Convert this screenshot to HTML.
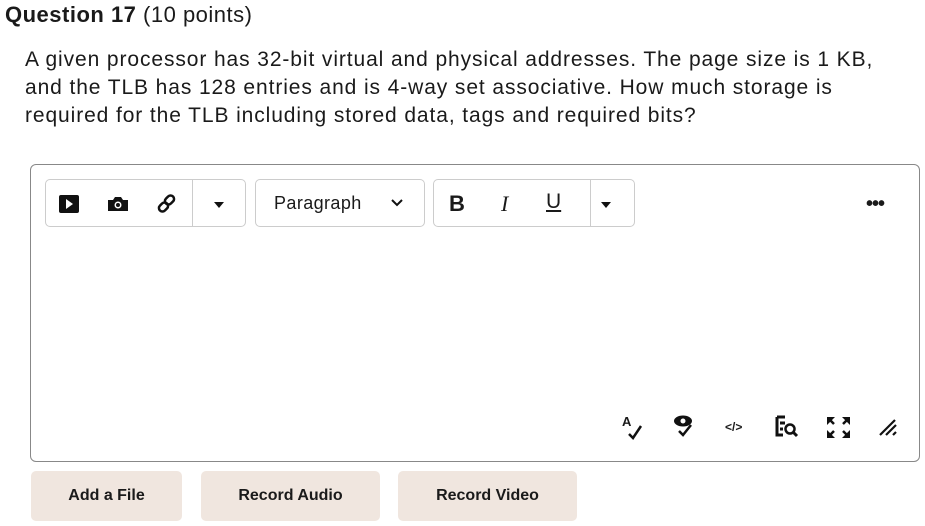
<!DOCTYPE html><html><head><style>
body{margin:0;width:925px;height:526px;background:#fff;font-family:"Liberation Sans",sans-serif;color:#1a1a1a;position:relative;overflow:hidden}
.a{position:absolute}
.t{left:5px;top:2px;font-size:22px;letter-spacing:0.5px}
.q{left:25px;top:46px;font-size:21px;line-height:28px;width:870px;letter-spacing:0.9px}
.ed{left:30px;top:164px;width:888px;height:296px;border:1px solid #888;border-radius:6px}
.g{top:179px;height:48px;border:1px solid #ccc;border-radius:5px;box-sizing:border-box}
.btn{top:471px;height:50px;background:#f0e6df;border-radius:5px;font-weight:bold;font-size:16px;display:flex;align-items:center;justify-content:center}
.dn{width:0;height:0;border-left:5px solid transparent;border-right:5px solid transparent;border-top:6px solid #111}
</style></head><body>
<div class="a t"><b>Question 17</b> (10 points)</div>
<div class="a q">A given processor has 32-bit virtual and physical addresses. The page size is 1 KB, and the TLB has 128 entries and is 4-way set associative. How much storage is required for the TLB including stored data, tags and required bits?</div>
<div class="a ed"></div>
<div class="a g" style="left:45px;width:201px"></div>
<div class="a" style="left:192px;top:180px;width:1px;height:46px;background:#ccc"></div>
<div class="a" style="left:59px;top:195px;width:20px;height:18px;background:#111;border-radius:2px"></div>
<div class="a" style="left:66px;top:199px;width:0;height:0;border-top:5px solid transparent;border-bottom:5px solid transparent;border-left:7px solid #fff"></div>
<svg class="a" style="left:106px;top:194px" width="24" height="20"><path d="M2 6h5l2-3h6l2 3h5v11H2z" fill="#111"/><circle cx="12" cy="11" r="3.5" fill="#fff"/><circle cx="12" cy="11" r="2" fill="#111"/></svg>
<svg class="a" style="left:155px;top:192px" width="24" height="24"><g fill="none" stroke="#111" stroke-width="2.5"><rect x="11" y="3" width="7" height="10" rx="3.5" transform="rotate(45 14.5 8)"/><rect x="5" y="10" width="7" height="10" rx="3.5" transform="rotate(45 8.5 15)"/></g></svg>
<div class="a dn" style="left:214px;top:202px"></div>
<div class="a g" style="left:255px;width:170px"></div>
<div class="a" style="left:274px;top:193px;font-size:18px;letter-spacing:0.4px">Paragraph</div>
<svg class="a" style="left:390px;top:198px" width="14" height="10"><path d="M2 2l5 5 5-5" fill="none" stroke="#111" stroke-width="2"/></svg>
<div class="a g" style="left:433px;width:202px"></div>
<div class="a" style="left:590px;top:180px;width:1px;height:46px;background:#ccc"></div>
<div class="a" style="left:449px;top:191px;font-size:22px;font-weight:bold">B</div>
<div class="a" style="left:501px;top:191px;font-size:22px;font-style:italic;font-family:'Liberation Serif',serif">I</div>
<div class="a" style="left:546px;top:190px;font-size:21px;text-decoration:underline">U</div>
<div class="a dn" style="left:601px;top:202px"></div>
<div class="a" style="left:866px;top:193px;font-size:20px;font-weight:bold;letter-spacing:-1px">•••</div>
<div class="a" style="left:622px;top:414px;font-size:13px;font-weight:bold">A</div>
<svg class="a" style="left:620px;top:412px" width="26" height="28"><path d="M9 22l4 4 8-12" fill="none" stroke="#111" stroke-width="2.5"/></svg>
<svg class="a" style="left:672px;top:414px" width="26" height="26"><ellipse cx="11" cy="7" rx="9" ry="5.5" fill="#111"/><circle cx="11" cy="7" r="2.5" fill="#fff"/><path d="M7 17l4 4 8-10" fill="none" stroke="#111" stroke-width="2.5"/></svg>
<div class="a" style="left:725px;top:420px;font-size:12px;font-weight:bold">&lt;/&gt;</div>
<svg class="a" style="left:775px;top:415px" width="26" height="26"><path d="M2 2h8M2 2v18h6M5 8h5M5 14h3" stroke="#111" stroke-width="3" fill="none"/><circle cx="15" cy="14" r="4.5" fill="none" stroke="#111" stroke-width="2.5"/><path d="M18 17l4 4" stroke="#111" stroke-width="3"/></svg>
<svg class="a" style="left:826px;top:416px" width="26" height="24"><g fill="#111"><path d="M1 1h8L1 9zM24 1h-8l8 8zM1 22h8L1 14zM24 22h-8l8-8z"/></g><g stroke="#111" stroke-width="2.5"><path d="M3 3l5 5M22 3l-5 5M3 20l5-5M22 20l-5-5"/></g></svg>
<svg class="a" style="left:878px;top:416px" width="22" height="22"><path d="M2 19L17 4M8 19l10-10M15 19l3-3" stroke="#111" stroke-width="2.2"/></svg>
<div class="a btn" style="left:31px;width:151px">Add a File</div>
<div class="a btn" style="left:201px;width:179px">Record Audio</div>
<div class="a btn" style="left:398px;width:179px">Record Video</div>
</body></html>
